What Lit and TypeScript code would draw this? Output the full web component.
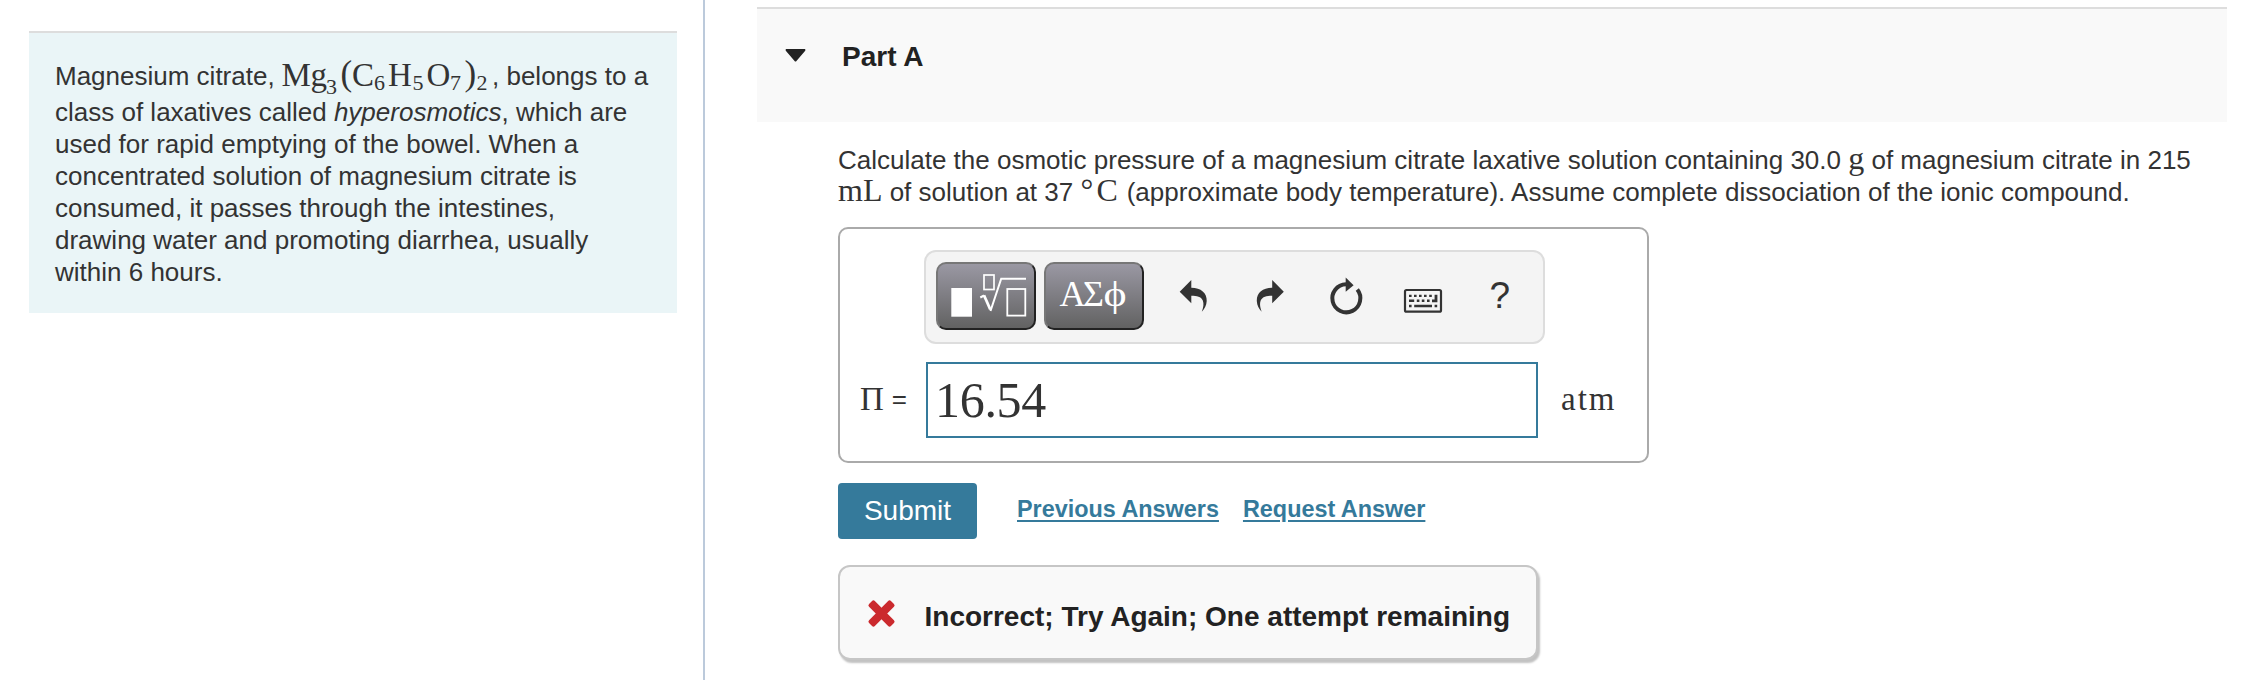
import { LitElement, html, css } from "lit";
import { customElement } from "lit/decorators.js";

@customElement("app-root")
export class AppRoot extends LitElement {
  static styles = css`
    :host { display: block; height: 680px; background: #fff; color: #333; font-family: "Liberation Sans", Arial, sans-serif; font-size: 26px; line-height: 32px; }
    * { box-sizing: border-box; }
    svg { display: block; flex: none; overflow: visible; }
    .page { display: grid; grid-template-columns: 705px 1fr; height: 680px; }
    .left { border-right: 2px solid #bccadb; padding: 31px 26px 0 29px; }
    .intro { border-top: 2px solid #ddd; background: #eaf5f7; height: 282px; padding: 24px 0 0 26px; white-space: nowrap; }
    .line { height: 32px; }
    .line.tall { height: 39px; line-height: 39px; display: flex; align-items: flex-start; }
    .lead { width: 226px; }
    .formula { width: 211px; height: 39px; }
    .formula text, .tm { font-family: "Liberation Serif", "Times New Roman", serif; }
    .big { font-size: 33px; }
    .paren { font-size: 35px; }
    .small { font-size: 22px; }
    .formula text { fill: #333; }
    .right { padding: 7px 39px 0 52px; }
    .head { border-top: 2px solid #ddd; background: #f9f9f9; height: 115px; padding: 32px 0 0 28px; display: flex; align-items: flex-start; font-weight: bold; font-size: 28px; color: #222; }
    .tri { width: 21px; height: 13px; margin: 8px 36px 0 0; }
    .body { padding: 22px 0 0 81px; }
    .q { white-space: nowrap; height: 32px; }
    .q .tm { font-size: 32px; line-height: 0; }
    .q .deg { display: inline-block; width: 16px; }
    .q .cel { display: inline-block; width: 23px; }
    .answer { margin-top: 19px; width: 811px; height: 236px; border: 2px solid #aaa; border-radius: 10px; padding: 21px 0 0 20px; }
    .tools { margin-left: 64px; width: 621px; height: 94px; border: 2px solid #ddd; border-radius: 12px; background: #f4f4f4; padding: 10px; display: flex; gap: 8px; }
    .btn { width: 100px; height: 68px; border: 2px solid; border-color: #777 #222 #222 #777; border-radius: 10px; background: linear-gradient(#9a98a3, #626262); color: #fff; flex: none; }
    .greek text { font-size: 36px; fill: #fff; font-family: "Liberation Serif", serif; }
    .icons { display: flex; margin-left: 3px; }
    .cell { width: 76.6px; height: 68px; display: flex; justify-content: center; }
    .help { font-size: 37px; line-height: 67px; }
    .row { display: flex; align-items: flex-start; margin-top: 18px; line-height: 72px; }
    .pi { width: 66px; display: flex; gap: 8px; padding-top: 1px; }
    .pi .tm { font-size: 33px; }
    .field { width: 612px; height: 76px; border: 2px solid #357a9b; font-size: 50px; padding-left: 7px; letter-spacing: -.3px; }
    .unit { margin-left: 23px; padding-top: 1px; font-size: 33px; letter-spacing: 2px; }
    .actions { display: flex; margin-top: 20px; height: 56px; }
    .submit { width: 139px; height: 56px; background: #357a9b; color: #fff; border-radius: 4px; font-size: 28px; line-height: 56px; text-align: center; }
    .link { color: #357a9b; font-weight: bold; font-size: 23.4px; line-height: 52px; text-decoration: underline; text-decoration-thickness: 2px; text-underline-offset: 3px; margin-left: 40px; }
    .link + .link { margin-left: 24px; }
    .fb { margin-top: 26px; width: 700px; height: 95px; border: 2px solid #c6c6c6; border-radius: 12px; background: #f9f9f9; box-shadow: 2px 3px 2px #c2c2c2; display: flex; align-items: center; padding: 8px 0 0 28px; font-size: 28px; font-weight: bold; color: #222; }
    .x { width: 27px; height: 27px; margin: -6px 29.5px 0 0; }
  `;

  private undoShape() {
    return html`<svg width="28" height="68" viewBox="0 0 28 68"><path fill="#333" d="M.7 29.7L12.3 18V25.7C22 25.7 28 31 27.7 39C27.5 43.5 25.5 47 22.8 49.7C24.5 45.5 25 41.5 23.8 38.5C22 34.5 18 33.7 12.3 33.7V41.3Z"/></svg>`;
  }
  private redoShape() {
    return html`<svg width="28" height="68" viewBox="0 0 28 68"><path transform="translate(28.5 0) scale(-1 1)" fill="#333" d="M.7 29.7L12.3 18V25.7C22 25.7 28 31 27.7 39C27.5 43.5 25.5 47 22.8 49.7C24.5 45.5 25 41.5 23.8 38.5C22 34.5 18 33.7 12.3 33.7V41.3Z"/></svg>`;
  }

  render() {
    return html`<div class="page">
      <div class="left"><div class="intro">
        <div class="line tall"><span class="lead">Magnesium citrate,</span><svg class="formula" viewBox="0 0 211 39">
          <text class="big" x="0.5" y="28.5">M</text><text class="big" x="29.5" y="28.5">g</text><text class="small" x="45" y="36.5">3</text>
          <text class="paren" x="59.5" y="28">(</text><text class="big" x="71" y="28.5">C</text><text class="small" x="93" y="32.5">6</text>
          <text class="big" x="107" y="28.5">H</text><text class="small" x="131.5" y="32.5">5</text><text class="big" x="145.5" y="28.5">O</text><text class="small" x="169" y="32.5">7</text>
          <text class="paren" x="183.5" y="28">)</text><text class="small" x="195.5" y="32.5">2</text>
        </svg><span>, belongs to a</span></div>
        <div class="line">class of laxatives called <i>hyperosmotics</i>, which are</div>
        <div class="line">used for rapid emptying of the bowel. When a</div>
        <div class="line">concentrated solution of magnesium citrate is</div>
        <div class="line">consumed, it passes through the intestines,</div>
        <div class="line">drawing water and promoting diarrhea, usually</div>
        <div class="line">within 6 hours.</div>
      </div></div>
      <div class="right">
        <div class="head"><svg class="tri" viewBox="0 0 21 13"><path d="M1 0H20Q21 1 20 2L11 12.5H10L1 2Q0 1 1 0Z" fill="#222"/></svg>Part A</div>
        <div class="body">
          <div class="q">Calculate the osmotic pressure of a magnesium citrate laxative solution containing 30.0 <span class="tm">g</span> of magnesium citrate in 215</div>
          <div class="q"><span class="tm">mL</span> of solution at 37 <span class="tm deg">°</span><span class="tm cel">C</span> (approximate body temperature). Assume complete dissociation of the ionic compound.</div>
          <div class="answer">
            <div class="tools">
              <div class="btn"><svg width="96" height="64" viewBox="0 0 96 64" fill="none" stroke="#fff" stroke-width="2">
                <rect x="13.3" y="24" width="20.7" height="28.7" fill="#fff" stroke="none"/>
                <rect x="46" y="11" width="10" height="14.5" stroke-width="1.7"/>
                <path d="M42.3 33.5L46 31.5" stroke-width="2"/><path d="M46 31.2L52.3 45.5" stroke-width="2.8"/><path d="M52.5 47L63.2 14.7H88"/>
                <rect x="69.3" y="25" width="18" height="26.6" stroke-width="1.8"/>
              </svg></div>
              <div class="btn greek"><svg width="96" height="64" viewBox="0 0 96 64"><text x="13.5" y="41.7">Α</text><text x="37" y="41.7">Σ</text><text transform="translate(57.5 41.7) scale(1.22 1)">ϕ</text></svg></div>
              <div class="icons">
                <div class="cell">${this.undoShape()}</div>
                <div class="cell">${this.redoShape()}</div>
                <div class="cell"><svg width="32" height="68" viewBox="0 0 32 68"><path d="M27.3 27.6A14 14 0 1 1 16 22.3" fill="none" stroke="#333" stroke-width="4"/><path d="M15.7 15.5L23.6 23.2L15.7 29.7Z" fill="#333"/></svg></div>
                <div class="cell"><svg width="38" height="68" viewBox="0 0 38 68" fill="#333"><rect x="1" y="28" width="36" height="21.7" rx="1.5" fill="#f4f4f4" stroke="#333" stroke-width="2.2"/>
                  <path d="M5 32.7h2.6v2.4H5zM10 32.7h2.6v2.4H10zM15 32.7h2.6v2.4H15zM20 32.7h2.6v2.4H20zM25.2 32.7h2.6v2.4h-2.6zM5 37.6h5.2V40H5zM12.8 37.6h2.6V40h-2.6zM17.8 37.6h2.6V40h-2.6zM23 37.6h2.6V40H23zM30.6 32.7h2.8V40.2H28V37.6h2.6zM5 42.8h2.6v2.4H5zM10.2 42.8h17.8v2.4H10.2zM30.6 42.8h2.6v2.4h-2.6z"/></svg></div>
                <div class="cell help">?</div>
              </div>
            </div>
            <div class="row"><div class="pi"><span class="tm">Π</span><span>=</span></div><div class="field tm">16.54</div><span class="tm unit">atm</span></div>
          </div>
          <div class="actions"><div class="submit">Submit</div><span class="link">Previous Answers</span><span class="link">Request Answer</span></div>
          <div class="fb"><svg class="x" viewBox="0 0 27 27" fill="#cb2a2e"><rect x="9.4" y="-2" width="8.2" height="31" rx="2" transform="rotate(45 13.5 13.5)"/><rect x="9.4" y="-2" width="8.2" height="31" rx="2" transform="rotate(-45 13.5 13.5)"/></svg>Incorrect; Try Again; One attempt remaining</div>
        </div>
      </div>
    </div>`;
  }
}
